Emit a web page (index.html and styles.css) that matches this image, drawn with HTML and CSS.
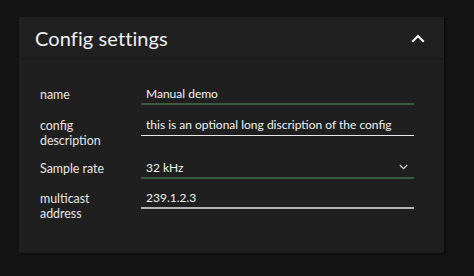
FILE: index.html
```html
<!DOCTYPE html>
<html>
<head>
<meta charset="utf-8">
<link rel="stylesheet" href="styles.css">
</head>
<body>
<div class="page">
  <section class="card">
    <header class="card-header">
      <h1 class="title">Config settings</h1>
      <svg class="collapse" width="14" height="9" viewBox="0 0 14 9"><path d="M1.2 7.8 L7 2 L12.8 7.8" fill="none" stroke="#f2f2f2" stroke-width="2.2"/></svg>
    </header>
    <div class="card-body">
      <div class="row">
        <div class="label">name</div>
        <div class="field field-green">Manual demo</div>
      </div>
      <div class="row">
        <div class="label">config<br>description</div>
        <div class="field field-white">this is an optional long discription of the config</div>
      </div>
      <div class="row">
        <div class="label">Sample rate</div>
        <div class="field field-green field-select">32 kHz
          <svg class="dropdown" width="9" height="6" viewBox="0 0 9 6"><path d="M0.8 1 L4.5 4.7 L8.2 1" fill="none" stroke="#cfcfcf" stroke-width="1.3"/></svg>
        </div>
      </div>
      <div class="row row-last">
        <div class="label">multicast<br>address</div>
        <div class="field field-grey">239.1.2.3</div>
      </div>
    </div>
  </section>
</div>
</body>
</html>
```
FILE: styles.css
```css
html, body {
  margin: 0;
  padding: 0;
  background: #131313;
  width: 474px;
  height: 276px;
  overflow: hidden;
  font-family: "Lato", "Noto Sans", sans-serif;
}
.page {
  padding: 17px 0 0 19px;
}
.card {
  width: 425px;
  height: 236px;
  background: #1f1f1f;
  border-radius: 2px;
  box-shadow: 1px 1px 2px rgba(0,0,0,0.5);
  box-sizing: border-box;
}
.card-header {
  height: 41px;
  display: flex;
  align-items: center;
  justify-content: space-between;
  padding: 0 19px 0 16px;
  border-bottom: 1px solid #161616;
  background: #202020;
}
.title {
  margin: 0;
  font-weight: 400;
  font-size: 20px;
  color: #f0f0f0;
  letter-spacing: 0.1px;
}
.collapse {
  display: block;
  margin-top: 1px;
}
.card-body {
  padding: 23px 0 0 21px;
  display: flex;
  flex-direction: column;
  gap: 8px;
}
.row {
  display: grid;
  grid-template-columns: 101px 273px;
  align-items: start;
}
.row-last {
  margin-top: -1px;
}
.label {
  padding-top: 5px;
  font-size: 12.4px;
  line-height: 15px;
  color: #e6e6e6;
}
.field {
  box-sizing: border-box;
  height: 23px;
  padding: 4px 5px 2px;
  font-size: 12px;
  line-height: 15px;
  color: #f2f2f2;
  white-space: nowrap;
  border-bottom: 2px solid #ddd;
}
.field-green { border-bottom-color: #3c5a42; }
.field-white { border-bottom-color: #e8e8e8; border-bottom-width: 1.5px; }
.field-grey { border-bottom-color: #b4b4b4; }
.field-select {
  display: flex;
  justify-content: space-between;
  align-items: center;
}
.dropdown {
  display: block;
  margin-right: 1px;
  margin-top: -2px;
}
```
